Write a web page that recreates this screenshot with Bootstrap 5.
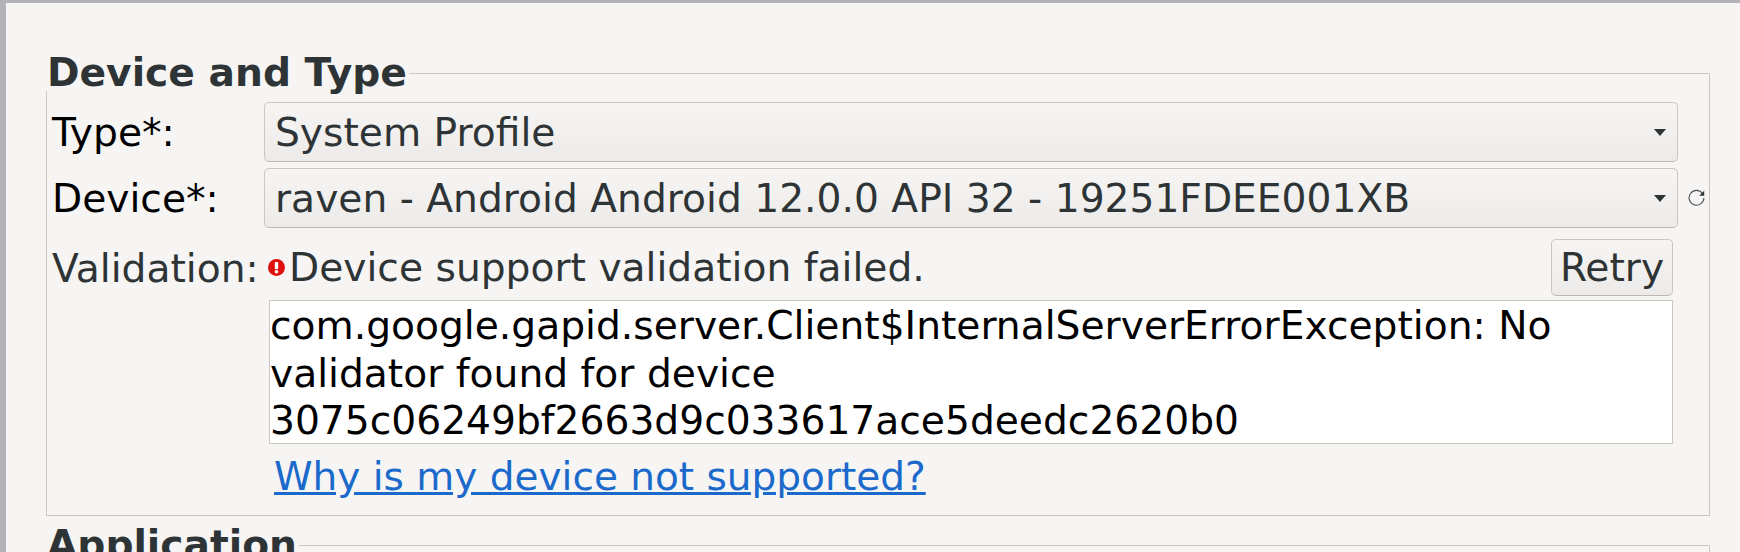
<!DOCTYPE html>
<html lang="en">
<head>
<meta charset="utf-8">
<title>Device and Type</title>
<link href="https://cdn.jsdelivr.net/npm/bootstrap@5.3.0/dist/css/bootstrap.min.css" rel="stylesheet">
<style>
html,body{height:552px;overflow:hidden}
body{background:#f6f5f4;border-top:3px solid #b3b2b7;border-left:6px solid #b3b2b7;font-family:"DejaVu Sans",sans-serif;font-size:39.2px;color:#2e3436;line-height:48px}
.frame-box{border:1px solid #cdc7c2;margin:0 30px 0 40px;padding:0}
.frame-one{margin-top:70px;height:443px}
.frame-two{margin-top:29px;height:40px}
.frame-title{display:table;float:none;width:auto;margin:-19px 0 0 -1px;padding:0 2px 0 1px;height:36px;background:#f6f5f4;font-size:39.2px;font-weight:700;line-height:36px;color:#2e3436}
.form-area{display:grid;grid-template-columns:212px 1414px 32px;row-gap:6px;padding:0 0 0 5px;margin-top:11px}
.field-label{color:#000;height:60px;line-height:62px}
.gtk-select{height:60px;width:100%;display:flex;align-items:center;padding:2px 11px 0 10px;font-size:39.2px;line-height:48px;color:#2e3436;border:1px solid #cdc7c2;border-bottom-color:#bfb8b1;border-radius:5px;background:linear-gradient(#f6f5f4,#edebe9);text-align:left}
.gtk-select:hover,.gtk-select:active{color:#2e3436;border-color:#cdc7c2;background:linear-gradient(#f6f5f4,#edebe9)}
.gtk-select::after{margin-left:auto;margin-top:-2px;border-top:7px solid #2e3436;border-left:6px solid transparent;border-right:6px solid transparent;border-bottom:0;margin-right:0}
.refresh-wrap{display:flex;align-items:center;justify-content:flex-end;padding:0 5px 2px 0}
.valid-label{color:#2e3436;margin-top:5px;line-height:60px}
.valid-col{margin-top:5px;padding-left:5px;padding-right:5px;grid-column:2}
.valid-head{display:flex;align-items:center;height:57px}
.err-mark{margin:0 4px 0 -1px;flex:none}
.retry-btn{margin-left:auto;height:57px;width:122px;padding:0;font-size:39.2px;line-height:48px;color:#2e3436;border:1px solid #cdc7c2;border-bottom-color:#bfb8b1;border-radius:5px;background:linear-gradient(#f6f5f4,#edebe9)}
.retry-btn:hover,.retry-btn:active{color:#2e3436;border-color:#cdc7c2;background:linear-gradient(#f6f5f4,#edebe9)}
.err-text{margin-top:4px;height:144px;background:#fff;border:1px solid #cdc7c2;color:#000;padding:1px 0 0;line-height:47.5px;overflow:hidden}
.help-link{display:inline-block;margin:9px 0 0 5px;font-size:39px;color:#1b6acb;text-decoration:underline;text-underline-offset:2px}
.help-link:hover{color:#1b6acb}
</style>
</head>
<body>
<div class="frame-box frame-one">
  <div class="frame-title">Device and Type</div>
  <div class="form-area">
    <div class="field-label">Type*:</div>
    <button type="button" class="btn gtk-select dropdown-toggle">System Profile</button>
    <div></div>
    <div class="field-label">Device*:</div>
    <button type="button" class="btn gtk-select dropdown-toggle">raven - Android Android 12.0.0 API 32 - 19251FDEE001XB</button>
    <div class="refresh-wrap">
      <svg width="17" height="17" viewBox="0 0 17 17" aria-label="Refresh"><path d="M14.6 4.6A7.4 7.4 0 1 0 15.9 9" fill="none" stroke="#4a5257" stroke-width="1.1"/><path d="M16.2 1.8v5h-5z" fill="#2e3436"/></svg>
    </div>
    <div class="valid-label">Validation:</div>
    <div class="valid-col">
      <div class="valid-head">
        <svg class="err-mark" width="17" height="17" viewBox="0 0 16 16" aria-label="Error"><circle cx="8" cy="8" r="8" fill="#e0100f"/><rect x="6.4" y="2.8" width="3.2" height="6.8" rx="1" fill="#fff"/><circle cx="8" cy="12" r="1.7" fill="#fff"/></svg>
        <span>Device support validation failed.</span>
        <button type="button" class="btn retry-btn">Retry</button>
      </div>
      <div class="err-text">com.google.gapid.server.Client$InternalServerErrorException: No validator found for device 3075c06249bf2663d9c033617ace5deedc2620b0</div>
      <a class="help-link" href="#">Why is my device not supported?</a>
    </div>
  </div>
</div>
<div class="frame-box frame-two">
  <div class="frame-title">Application</div>
</div>
</body>
</html>
